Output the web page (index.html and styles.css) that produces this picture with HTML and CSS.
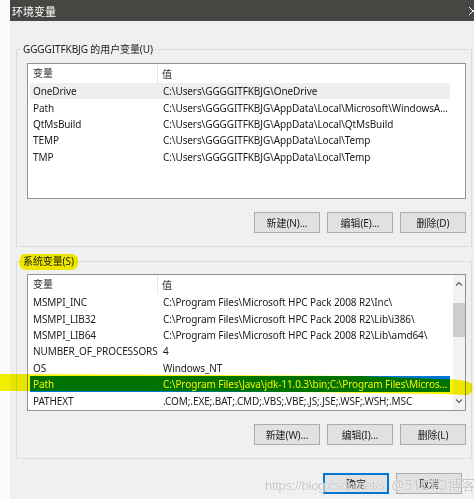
FILE: index.html
```html
<!DOCTYPE html>
<html lang="zh-CN">
<head>
<meta charset="utf-8">
<title>环境变量</title>
<link rel="stylesheet" href="styles.css">
</head>
<body>
<div class="screen">
  <div class="edge"></div>
  <div class="dialog">
    <div class="titlebar">
      <span class="title">环境变量</span>
      <svg class="close" width="10" height="10" viewBox="0 0 10 10"><path d="M1 1 L9 9 M9 1 L1 9" stroke="#fff" stroke-width="1"/></svg>
    </div>
    <div class="body">
      <fieldset class="group">
        <legend>GGGGITFKBJG 的用户变量(U)</legend>
        <div class="gbody">
          <div class="list user-list">
            <div class="rows">
              <div class="head"><span class="c1">变量</span><span class="c2">值</span></div>
              <div class="row soft"><span class="c1">OneDrive</span><span class="c2">C:\Users\GGGGITFKBJG\OneDrive</span></div>
              <div class="row"><span class="c1">Path</span><span class="c2">C:\Users\GGGGITFKBJG\AppData\Local\Microsoft\WindowsA...</span></div>
              <div class="row"><span class="c1">QtMsBuild</span><span class="c2">C:\Users\GGGGITFKBJG\AppData\Local\QtMsBuild</span></div>
              <div class="row"><span class="c1">TEMP</span><span class="c2">C:\Users\GGGGITFKBJG\AppData\Local\Temp</span></div>
              <div class="row"><span class="c1">TMP</span><span class="c2">C:\Users\GGGGITFKBJG\AppData\Local\Temp</span></div>
            </div>
          </div>
          <div class="buttons">
            <button class="btn">新建(N)...</button>
            <button class="btn">编辑(E)...</button>
            <button class="btn">删除(D)</button>
          </div>
        </div>
      </fieldset>
      <fieldset class="group sys">
        <legend>系统变量(S)</legend>
        <div class="gbody">
          <div class="list sys-list">
            <div class="rows">
              <div class="head"><span class="c1">变量</span><span class="c2">值</span></div>
              <div class="row"><span class="c1">MSMPI_INC</span><span class="c2">C:\Program Files\Microsoft HPC Pack 2008 R2\Inc\</span></div>
              <div class="row"><span class="c1">MSMPI_LIB32</span><span class="c2">C:\Program Files\Microsoft HPC Pack 2008 R2\Lib\i386\</span></div>
              <div class="row"><span class="c1">MSMPI_LIB64</span><span class="c2">C:\Program Files\Microsoft HPC Pack 2008 R2\Lib\amd64\</span></div>
              <div class="row"><span class="c1">NUMBER_OF_PROCESSORS</span><span class="c2">4</span></div>
              <div class="row"><span class="c1">OS</span><span class="c2">Windows_NT</span></div>
              <div class="row selected"><span class="c1">Path</span><span class="c2">C:\Program Files\Java\jdk-11.0.3\bin;C:\Program Files\Micros...</span></div>
              <div class="row"><span class="c1">PATHEXT</span><span class="c2">.COM;.EXE;.BAT;.CMD;.VBS;.VBE;.JS;.JSE;.WSF;.WSH;.MSC</span></div>
            </div>
            <div class="scrollbar">
              <div class="arrow"><svg width="8" height="5" viewBox="0 0 8 5"><path d="M1 4.5 L4 1.5 L7 4.5" fill="none" stroke="#606060" stroke-width="1.2"/></svg></div>
              <div class="track"><div class="thumb"></div></div>
              <div class="arrow"><svg width="8" height="5" viewBox="0 0 8 5"><path d="M1 0.5 L4 3.5 L7 0.5" fill="none" stroke="#606060" stroke-width="1.2"/></svg></div>
            </div>
          </div>
          <div class="buttons sys-buttons">
            <button class="btn">新建(W)...</button>
            <button class="btn">编辑(I)...</button>
            <button class="btn">删除(L)</button>
          </div>
        </div>
      </fieldset>
      <div class="footer">
        <button class="btn default">确定</button>
        <button class="btn">取消</button>
      </div>
    </div>
  </div>
  <svg class="marker" width="474" height="499" viewBox="0 0 474 499">
    <path d="M21 256 Q20 254 27 254 L72 254 Q79 255 78 262 Q78 270 71 270 L26 270 Q19 269 19 262 Z" fill="#fbf500"/>
    <path d="M0 374 L200 375 L360 376 L440 379 Q466 379 472 384 Q474 392 468 395 L440 394 L300 392 L150 391 L0 391 Z" fill="#f6f200"/>
  </svg>
  <div class="watermark"><span class="wm1">https://blog.csdn.net/s</span><span class="wm2">@51CTO博客</span></div>
</div>
</body>
</html>
```
FILE: styles.css
```css
html, body {
  margin: 0;
  padding: 0;
}
body {
  width: 474px;
  height: 499px;
  overflow: hidden;
  background: #ffffff;
  font-family: "Noto Sans", "Noto Sans CJK SC", sans-serif;
  font-size: 10px;
  letter-spacing: -0.1px;
  color: #1b1b1b;
}
.screen {
  position: relative;
  display: flex;
  width: 474px;
  height: 499px;
}
.edge {
  width: 10px;
  flex: none;
  background: #fbfbfb;
}
.dialog {
  flex: 1;
  display: flex;
  flex-direction: column;
  background: #f0f0f0;
  overflow: hidden;
}
.titlebar {
  height: 21px;
  flex: none;
  background: #484643;
  color: #ffffff;
  display: flex;
  align-items: center;
  justify-content: space-between;
  padding-left: 2px;
  overflow: hidden;
}
.title {
  font-family: "Noto Sans CJK SC", sans-serif;
  font-size: 11px;
  line-height: 14px;
  letter-spacing: 0;
}
.close {
  margin-right: -4px;
}
.body {
  padding: 20px 2px 0 6px;
  display: flex;
  flex-direction: column;
}
.group {
  margin: 0;
  padding: 0;
  border: 1px solid #dcdcdc;
  min-width: 0;
}
.group legend {
  margin-left: 4px;
  padding: 0 2px;
  line-height: 16px;
  font-size: 10px;
  color: #1b1b1b;
}
.sys {
  margin-top: 6px;
}
.gbody {
  padding: 6px 5px 13px 10px;
}
.sys .gbody {
  padding-top: 5px;
}
.list {
  display: flex;
  background: #ffffff;
  border: 1px solid #8f9297;
  box-sizing: border-box;
  height: 136px;
  overflow: hidden;
}
.sys-list {
  height: 137px;
}
.rows {
  flex: 1;
  min-width: 0;
  padding-left: 2px;
}
.head, .row {
  display: flex;
  width: 420px;
  white-space: nowrap;
}
.head {
  height: 19px;
  align-items: center;
  color: #2a2a2a;
}
.row {
  height: 16.4px;
  align-items: center;
}
.c1 {
  width: 128px;
  flex: none;
  padding-left: 3px;
  box-sizing: border-box;
  overflow: hidden;
}
.c2 {
  flex: 1;
  padding-left: 5px;
  overflow: hidden;
}
.head .c1 {
  border-right: 1px solid #e5e5e5;
  height: 19px;
  line-height: 19px;
}
.head .c2 {
  padding-left: 4px;
}
.row.soft {
  background: #efefef;
}
.row.selected {
  background: #0078d7;
  color: #ffffff;
}
.scrollbar {
  width: 12px;
  flex: none;
  background: #f3f3f3;
  display: flex;
  flex-direction: column;
}
.arrow {
  height: 17px;
  display: flex;
  align-items: center;
  justify-content: center;
}
.track {
  flex: 1;
  padding-top: 11px;
}
.thumb {
  height: 34px;
  background: #cdcdcd;
}
.buttons {
  display: flex;
  justify-content: flex-end;
  gap: 7px;
  margin-top: 13px;
}
.btn {
  width: 66px;
  height: 21px;
  box-sizing: border-box;
  margin: 0;
  padding: 0;
  background: #e1e1e1;
  border: 1px solid #adadad;
  font-family: "Noto Sans", "Noto Sans CJK SC", sans-serif;
  font-size: 10px;
  letter-spacing: -0.1px;
  color: #1b1b1b;
}
.footer {
  display: flex;
  justify-content: flex-end;
  gap: 7px;
  margin-top: 14px;
  padding-right: 10px;
}
.btn.default {
  border: 2px solid #0078d7;
}
.marker {
  position: absolute;
  left: 0;
  top: 0;
  mix-blend-mode: multiply;
  pointer-events: none;
}
.watermark {
  position: absolute;
  left: 265px;
  top: 474px;
  display: flex;
  align-items: baseline;
  gap: 7px;
  color: rgba(185, 185, 185, 0.8);
  text-shadow: 0 0 1px rgba(255, 255, 255, 1), 0 0 2px rgba(255, 255, 255, 0.8);
  pointer-events: none;
  white-space: nowrap;
  letter-spacing: 0;
}
.wm1 {
  font-family: "Liberation Sans", sans-serif;
  font-size: 13px;
  letter-spacing: -0.3px;
}
.wm2 {
  font-family: "Noto Sans", "Noto Sans CJK SC", sans-serif;
  font-size: 14px;
}
```
